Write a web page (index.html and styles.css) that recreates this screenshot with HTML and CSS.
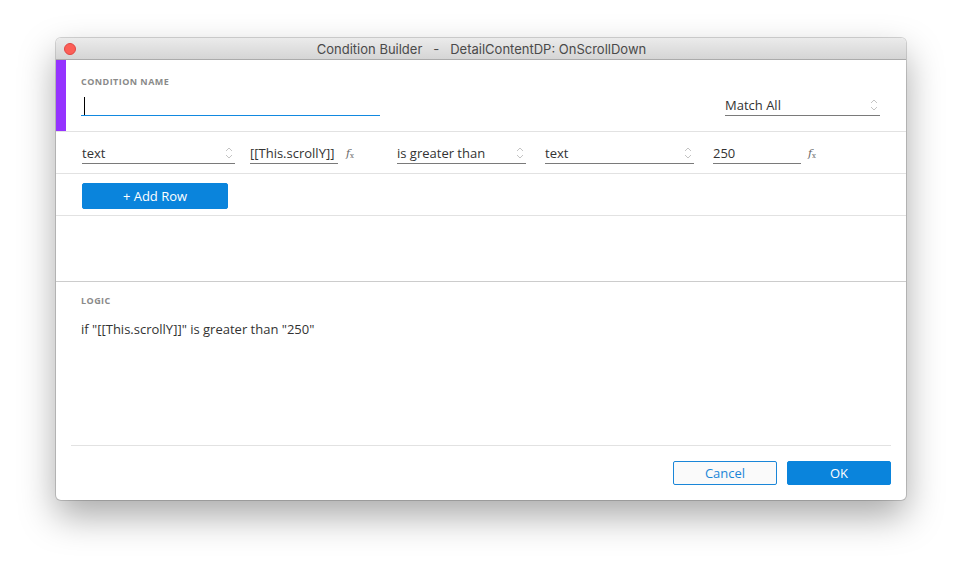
FILE: index.html
```html
<!DOCTYPE html>
<html>
<head>
<meta charset="utf-8">
<link rel="stylesheet" href="styles.css">
</head>
<body>
<div class="window">
  <div class="titlebar">
    <span class="close"></span>
    <div class="title">Condition Builder&nbsp;&nbsp;&nbsp;-&nbsp;&nbsp;&nbsp;DetailContentDP: OnScrollDown</div>
  </div>
  <div class="name-section">
    <div class="accent"></div>
    <div class="name-body">
      <div class="name-left">
        <div class="label">CONDITION NAME</div>
        <div class="name-input"><span class="caret"></span></div>
      </div>
      <div class="select match">
        <span>Match All</span>
        <svg class="arrows" width="8" height="14" viewBox="0 0 8 14"><path d="M1 5 L4 2 L7 5 M1 9 L4 12 L7 9" fill="none" stroke="#c4c4c4" stroke-width="1"/></svg>
      </div>
    </div>
  </div>
  <div class="row-section">
    <div class="select w-type">
      <span>text</span>
      <svg class="arrows" width="8" height="14" viewBox="0 0 8 14"><path d="M1 5 L4 2 L7 5 M1 9 L4 12 L7 9" fill="none" stroke="#c4c4c4" stroke-width="1"/></svg>
    </div>
    <div class="field w-expr"><span>[[This.scrollY]]</span></div>
    <span class="fx"><i>f</i><sub>x</sub></span>
    <div class="select w-op">
      <span>is greater than</span>
      <svg class="arrows" width="8" height="14" viewBox="0 0 8 14"><path d="M1 5 L4 2 L7 5 M1 9 L4 12 L7 9" fill="none" stroke="#c4c4c4" stroke-width="1"/></svg>
    </div>
    <div class="select w-type2">
      <span>text</span>
      <svg class="arrows" width="8" height="14" viewBox="0 0 8 14"><path d="M1 5 L4 2 L7 5 M1 9 L4 12 L7 9" fill="none" stroke="#c4c4c4" stroke-width="1"/></svg>
    </div>
    <div class="field w-val"><span>250</span></div>
    <span class="fx"><i>f</i><sub>x</sub></span>
  </div>
  <div class="add-section">
    <button class="btn-primary add">+ Add Row</button>
  </div>
  <div class="empty-section"></div>
  <div class="logic-section">
    <div class="label">LOGIC</div>
    <div class="logic-text">if "[[This.scrollY]]" is greater than "250"</div>
  </div>
  <div class="footer">
    <button class="btn-secondary">Cancel</button>
    <button class="btn-primary ok">OK</button>
  </div>
</div>
</body>
</html>
```
FILE: styles.css
```css
html, body {
  margin: 0;
  padding: 0;
  background: #ffffff;
}
body {
  padding: 38px 0 0 56px;
  min-height: 574px;
  box-sizing: border-box;
  font-family: "Open Sans", "Noto Sans", sans-serif;
  color: #333;
}
.window {
  width: 850px;
  height: 462px;
  box-sizing: border-box;
  background: #fff;
  border-radius: 5px;
  overflow: hidden;
  box-shadow: 0 0 0 1px rgba(0,0,0,0.16), 0 16px 36px rgba(0,0,0,0.34);
  display: flex;
  flex-direction: column;
}
.titlebar {
  height: 22px;
  flex: none;
  box-sizing: border-box;
  background: linear-gradient(#ebebeb, #d5d5d5);
  border-bottom: 1px solid #ababab;
  display: flex;
  align-items: center;
  justify-content: center;
  position: relative;
}
.close {
  position: absolute;
  left: 8px;
  top: 5px;
  width: 12px;
  height: 12px;
  border-radius: 50%;
  background: #fc5f57;
  box-sizing: border-box;
  border: 0.5px solid #df4744;
}
.title {
  font-family: "Inter", "Noto Sans", sans-serif;
  font-size: 13px;
  color: #4a4a4a;
  padding-left: 1px;
}
.name-section {
  height: 72px;
  flex: none;
  display: flex;
  border-bottom: 1px solid #e2e2e2;
  box-sizing: border-box;
}
.accent {
  width: 10px;
  background: #9533ff;
}
.name-body {
  flex: 1;
  display: flex;
  justify-content: space-between;
  align-items: flex-end;
  padding: 0 26px 15px 15px;
}
.label {
  font-size: 9px;
  font-weight: 700;
  color: #8a8a8a;
  letter-spacing: 0.45px;
}
.name-left .label {
  margin-bottom: 10px;
}
.name-input {
  width: 299px;
  height: 18px;
  border-bottom: 1px solid #1289e0;
  display: flex;
  align-items: flex-end;
  padding-left: 3px;
  box-sizing: border-box;
}
.caret {
  width: 1px;
  height: 18px;
  background: #000;
}
.select, .field {
  display: flex;
  align-items: center;
  justify-content: space-between;
  border-bottom: 1px solid #7a7a7a;
  height: 21px;
  box-sizing: border-box;
  font-size: 13px;
  color: #333;
}
.select span, .field span {
  line-height: 20px;
}
.arrows {
  margin-right: 2px;
}
.match { width: 155px; }
.row-section {
  height: 42px;
  flex: none;
  box-sizing: border-box;
  border-bottom: 1px solid #e2e2e2;
  display: flex;
  align-items: center;
  padding: 1px 0 0 26px;
}
.w-type { width: 153px; margin-right: 15px; }
.w-expr { width: 88px; }
.fx {
  font-family: "DejaVu Serif", "Liberation Serif", serif;
  font-size: 11px;
  color: #666;
  margin-left: 8px;
  width: 51px;
  display: inline-block;
}
.fx sub { font-size: 7px; vertical-align: -1px; font-style: normal; }
.w-op { width: 129px; margin-right: 19px; }
.w-type2 { width: 149px; margin-right: 19px; }
.w-val { width: 88px; }
.row-section .fx:last-child { margin-left: 7px; }
.add-section {
  height: 42px;
  flex: none;
  box-sizing: border-box;
  border-bottom: 1px solid #e2e2e2;
  padding: 9px 0 0 26px;
}
button {
  font-family: "Open Sans", "Noto Sans", sans-serif;
  font-size: 13px;
  border-radius: 2px;
  box-sizing: border-box;
  cursor: pointer;
}
.btn-primary {
  background: #0a84dc;
  color: #fff;
  border: 1px solid #0a84dc;
}
.add {
  width: 146px;
  height: 26px;
  padding: 0;
}
.empty-section {
  height: 66px;
  flex: none;
  box-sizing: border-box;
  border-bottom: 1px solid #cccccc;
}
.logic-section {
  flex: 1;
  margin: 0 15px;
  padding: 12px 0 0 10px;
  border-bottom: 1px solid #e2e2e2;
}
.logic-text {
  font-size: 13px;
  color: #333;
  margin-top: 13px;
}
.footer {
  height: 54px;
  flex: none;
  box-sizing: border-box;
  display: flex;
  justify-content: flex-end;
  align-items: flex-start;
  gap: 10px;
  padding: 15px 15px 0 0;
}
.btn-secondary {
  width: 104px;
  height: 24px;
  background: #fafafa;
  border: 1px solid #1a86d8;
  color: #1a86d8;
  padding: 0;
}
.ok {
  width: 104px;
  height: 24px;
  padding: 0;
}
```
